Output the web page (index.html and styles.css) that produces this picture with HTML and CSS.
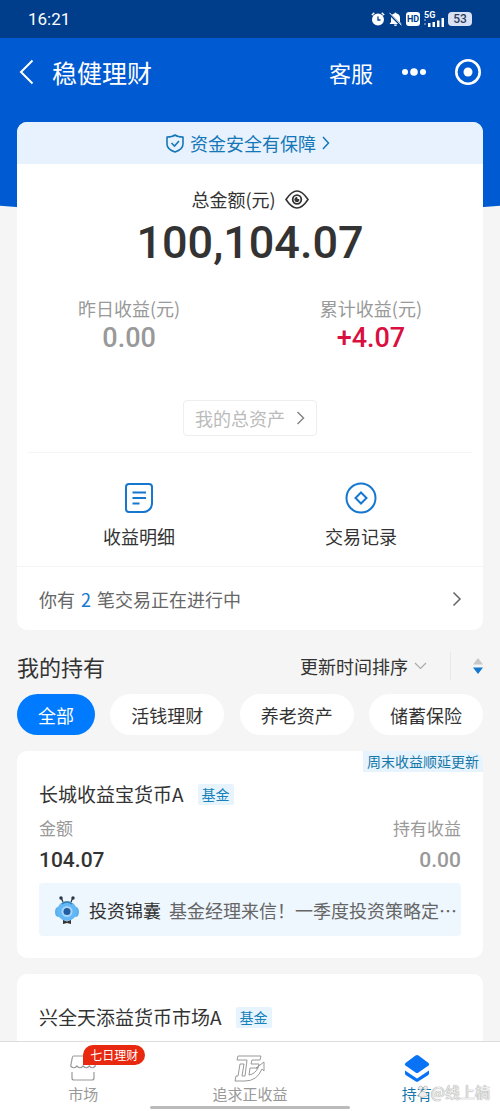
FILE: index.html
```html
<!DOCTYPE html>
<html lang="zh-CN">
<head>
<meta charset="utf-8">
<meta name="viewport" content="width=device-width, initial-scale=1">
<title>稳健理财</title>
<link rel="stylesheet" href="styles.css">
</head>
<body>
<div class="app">
  <div class="status">
    <span class="time">16:21</span>
    <div class="status-icons">
      <svg width="14" height="14" viewBox="0 0 14 14"><circle cx="7" cy="7.500" r="6" fill="#fff"/><path d="M.8 3 3.300.9M13.200 3 10.700.9" stroke="#fff" stroke-width="1.400"/><path d="M7 4.500v3.500h2.500" stroke="#003e8c" stroke-width="1.300" fill="none"/></svg>
      <svg width="13" height="15" viewBox="0 0 13 15"><path d="M6.500.5a1 1 0 0 1 1 1A4.500 4.500 0 0 1 11 6v4l1.500 2H.5L2 10V6a4.500 4.500 0 0 1 3.500-4.500 1 1 0 0 1 1-1zM5 12.500h3a1.500 1.500 0 0 1-3 0z" fill="#fff"/><path d="m0 1.500 12.500 12.500" stroke="#003e8c" stroke-width="2.200"/><path d="m.5.8 12 12.500" stroke="#fff" stroke-width="1"/></svg>
      <span class="hd">HD</span>
      <span class="signal"><span class="net">5G</span><svg width="20" height="9" viewBox="0 0 20 9"><path d="M4 9V5h2.500v4zM8.500 9V4H11v5zM13 9V2.500h2.500V9zM17.500 9V0H20v9z" fill="#fff"/><path d="M0 1h2v2H0zM0 5h2v2H0z" fill="#fff" opacity=".35"/></svg></span>
      <span class="battery">53</span>
    </div>
  </div>
  <main class="content">
    <header class="hero">
      <div class="titlebar">
        <button class="icon-btn" aria-label="返回"><svg width="16" height="26" viewBox="0 0 16 26" fill="none" stroke="#fff" stroke-width="2"><path d="M14.500 1.500 3 13l11.500 11.500"/></svg></button>
        <h1 class="title">稳健理财</h1>
        <button class="service">客服</button>
        <button class="icon-btn" aria-label="更多"><svg width="26" height="8" viewBox="0 0 26 8" fill="#fff"><circle cx="4" cy="4" r="3"/><circle cx="13" cy="4" r="3.800"/><circle cx="22" cy="4" r="3"/></svg></button>
        <button class="icon-btn close" aria-label="关闭"><svg width="26" height="26" viewBox="0 0 26 26"><circle cx="13" cy="13" r="11.700" fill="none" stroke="#fff" stroke-width="2.600"/><circle cx="13" cy="13" r="4.500" fill="#fff"/></svg></button>
      </div>
    </header>
    <section class="card summary">
      <a class="safety" href="#">
        <svg width="18" height="19" viewBox="0 0 18 19" fill="none" stroke="#1677b8" stroke-width="1.600"><path d="M9 1c2 1.500 4.500 2 8 2v7c0 4-3.500 6.500-8 8-4.500-1.500-8-4-8-8V3c3.500 0 6-.5 8-2z" stroke-linejoin="round"/><path d="m5.500 9 3 3 4.500-5"/></svg>
        <span>资金安全有保障</span>
        <svg width="8" height="14" viewBox="0 0 8 14" fill="none" stroke="#1677b8" stroke-width="1.500"><path d="m1 1 5.500 6L1 13"/></svg>
      </a>
      <div class="total-label"><span>总金额(元)</span>
        <button class="icon-btn" aria-label="隐藏金额"><svg width="24" height="19" viewBox="0 0 24 19" fill="none" stroke="#333" stroke-width="1.600"><path d="M1 9.500C5 3.500 8 1 12 1s7 2.500 11 8.500C19 15.500 16 18 12 18S5 15.500 1 9.500z"/><circle cx="12" cy="9.500" r="4.300" stroke-width="1.800"/><path d="M12 7.500v2h2a2.100 2.100 0 1 1-2-2z" fill="#333" stroke-width="1"/></svg></button>
      </div>
      <div class="total">100,104.07</div>
      <div class="earnings">
        <div><div class="earn-label">昨日收益(元)</div><div class="earn">0.00</div></div>
        <div><div class="earn-label">累计收益(元)</div><div class="earn gain">+4.07</div></div>
      </div>
      <button class="assets">我的总资产 <svg width="9" height="14" viewBox="0 0 9 14" fill="none" stroke="#888" stroke-width="1.500"><path d="m1.500 1 6 6-6 6"/></svg></button>
      <div class="shortcuts">
        <a class="shortcut" href="#"><svg width="28" height="32" viewBox="0 0 28 32" fill="none" stroke="#1677cf" stroke-width="2"><path d="M4 2h20q3 0 3 3v17q-1 7-8 8H4q-3 0-3-3V5q0-3 3-3z"/><path d="M7.500 10.500H21M7.500 16H21M7.500 21.500h7"/></svg><span>收益明细</span></a>
        <a class="shortcut" href="#"><svg width="32" height="32" viewBox="0 0 32 32" fill="none" stroke="#1677cf" stroke-width="2"><circle cx="16" cy="16" r="14.500"/><path d="m16 10.500 5.500 5.500-5.500 5.500-5.500-5.500z"/></svg><span>交易记录</span></a>
      </div>
      <a class="pending" href="#"><span>你有 <b>2</b> 笔交易正在进行中</span><svg width="10" height="16" viewBox="0 0 10 16" fill="none" stroke="#666" stroke-width="1.500"><path d="m1.500 1.500 6.500 6.500-6.500 6.500"/></svg></a>
    </section>
    <div class="holdings-head">
      <h2 class="holdings-title">我的持有</h2>
      <button class="sort">更新时间排序 <svg width="13" height="8" viewBox="0 0 13 8" fill="none" stroke="#aaa" stroke-width="1.200"><path d="m1 1 5.500 5.500L12 1"/></svg></button>
      <button class="order" aria-label="排序方向"><svg width="10" height="18" viewBox="0 0 10 18"><path d="m5 1 5 6.500H0z" fill="#c8c8c8"/><path d="M0 10.500h10L5 17z" fill="#1677cf"/></svg></button>
    </div>
    <div class="filters">
      <button class="chip active">全部</button>
      <button class="chip">活钱理财</button>
      <button class="chip">养老资产</button>
      <button class="chip">储蓄保险</button>
    </div>
    <article class="card holding">
      <span class="notice">周末收益顺延更新</span>
      <h3 class="fund">长城收益宝货币A <span class="tag">基金</span></h3>
      <div class="pair small"><span>金额</span><span>持有收益</span></div>
      <div class="pair amount"><span>104.07</span><span class="muted">0.00</span></div>
      <a class="tip" href="#">
        <svg class="mascot" width="26" height="30" viewBox="0 0 26 30"><path d="M9 7 7.500 3.500M17 7l1.500-3.500" stroke="#333" stroke-width="1.300"/><circle cx="7" cy="3" r="1.700" fill="#293647"/><circle cx="19" cy="3" r="1.700" fill="#293647"/><ellipse cx="4" cy="17" rx="3" ry="5" fill="#5aafee"/><ellipse cx="22" cy="17" rx="3" ry="5" fill="#5aafee"/><circle cx="13" cy="16" r="10" fill="#63b7f4"/><path d="M8 9q5-4 10 0" fill="none" stroke="#3c7cae" stroke-width="1.500"/><circle cx="13" cy="16.500" r="5.500" fill="#a5d6fa"/><circle cx="13" cy="16.500" r="3.500" fill="#245ca0"/><path d="m9 25 4 1.500 4-1.500v4l-4-1-4 1z" fill="#333"/></svg>
        <span class="tip-text"><strong>投资锦囊</strong>基金经理来信！一季度投资策略定…</span>
      </a>
    </article>
    <article class="card holding">
      <h3 class="fund">兴全天添益货币市场A <span class="tag">基金</span></h3>
    </article>
  </main>
  <nav class="tabs">
    <a class="tab" href="#">
      <span class="tab-icon"><svg width="26" height="28" viewBox="0 0 26 28" fill="none" stroke="#999" stroke-width="1.200"><path d="M3.500 2h19q1 0 1.300 2l1.500 8q-3 3.500-6 0-3.100 3.500-6.200 0-3.100 3.500-6.200 0-3 3.500-6.200 0L2.200 4q.3-2 1.300-2zM2 18v6q0 2 2 2h18q2 0 2-2v-6"/></svg><span class="badge">七日理财</span></span>
      <span>市场</span>
    </a>
    <a class="tab" href="#">
      <span class="tab-icon"><svg width="34" height="28" viewBox="0 0 34 28" fill="none" stroke="#999" stroke-width="1"><path d="M5 2h23l-1 4h-8l-1 4h8l-1 4h-8l-1 7q6-1 9-7h-2l8-6v9l-2-2q-5 12-17 12H2l1-5h2L7 10h4L9 22h3l2-16H4z"/></svg></span>
      <span>追求正收益</span>
    </a>
    <a class="tab current" href="#">
      <span class="tab-icon"><svg width="26" height="28" viewBox="0 0 26 28" fill="#0a72f5"><path d="M11.500 1.500q1.500-1 3 0l10 7.500q1.500 1.200 0 2.400l-10 7.200q-1.500 1-3 0l-10-7.200Q0 10.200 1.500 9z"/><path d="m1 16.500 12 8 12-8v3q0 1-1 1.700l-9.500 6q-1.500 1-3 0L2 21.200Q1 20.500 1 19.500z"/></svg></span>
      <span>持有</span>
    </a>
    <span class="watermark"><svg width="12" height="14" viewBox="0 0 12 14" fill="#eee" stroke="#aaa" stroke-width=".6"><circle cx="3.500" cy="3" r="2"/><circle cx="8.500" cy="3" r="2"/><path d="M6 6q4 1 4.500 5-4.500 3-9 0Q2 7 6 6z"/></svg>@线上楠</span>
  </nav>
</div>
</body>
</html>
```
FILE: styles.css
```css
* { box-sizing: border-box; }
body { margin: 0; font-family: "Noto Sans CJK SC", sans-serif; color: #333; background: #f5f5f5; }
h1, h2, h3 { margin: 0; font-weight: 400; }
button { margin: 0; padding: 0; border: 0; background: none; font: inherit; color: inherit; }
a { color: inherit; text-decoration: none; }
svg { display: block; flex: none; }
.app { height: 100vh; display: flex; flex-direction: column; }
.status { flex: none; height: 38px; padding: 0 28px; display: flex; align-items: center; justify-content: space-between; background: #003e8c; color: #fff; }
.time { font: 400 17px/38px Roboto, sans-serif; }
.status-icons { display: flex; align-items: center; gap: 4px; }
.hd { width: 14px; border-radius: 3px; background: #fff; color: #003e8c; font: 700 9px/14px Roboto, sans-serif; text-align: center; }
.signal { display: flex; flex-direction: column; height: 15px; position: relative; justify-content: flex-end; }
.net { position: absolute; top: -1px; left: 0; font: 700 9px/9px Roboto, sans-serif; }
.battery { width: 24px; border-radius: 4px; background: #d9e2f2; color: #2b3d5c; font: 500 12px/14px Roboto, sans-serif; text-align: center; }
.content { flex: 1; min-height: 0; overflow: hidden; }
.hero { height: 178px; background: #005ad2; clip-path: ellipse(150% 100% at 50% 0); color: #fff; }
.titlebar { height: 68px; padding: 0 19px 0 18px; display: flex; align-items: center; }
.title { flex: 1; margin-left: 18px; font-size: 25px; line-height: 36px; }
.service { margin-right: 28px; font-size: 22px; line-height: 32px; }
.close { margin-left: 28px; }
.card { margin: 0 17px; border-radius: 10px; background: #fff; position: relative; overflow: hidden; }
.summary { margin-top: -94px; display: flex; flex-direction: column; }
.safety { height: 42px; padding-right: 4px; display: flex; align-items: center; justify-content: center; gap: 6px; background: #e7f2fe; color: #1677b8; font-size: 18px; }
.total-label { margin-top: 21px; display: flex; align-items: center; justify-content: center; gap: 9px; font-size: 18px; line-height: 28px; }
.total { text-align: center; font: 500 45px/60px Roboto, sans-serif; }
.earnings { margin-top: 21px; padding: 0 61px; display: flex; justify-content: space-between; text-align: center; color: #999; }
.earn-label { font-size: 18px; line-height: 28px; }
.earn { font: 500 27px/32px Roboto, sans-serif; }
.gain { color: #d90f40; }
.assets { align-self: center; margin-top: 46px; height: 36px; padding: 0 11px; display: flex; align-items: center; gap: 11px; border: 1px solid #eee; border-radius: 4px; color: #bbb; font-size: 18px; }
.shortcuts { margin: 16px 11px 0; padding-top: 29px; height: 114px; border-top: 1px solid #f5f5f5; display: grid; grid-template-columns: 1fr 1fr; }
.shortcut { display: flex; flex-direction: column; align-items: center; gap: 8px; font-size: 18px; line-height: 28px; }
.pending { height: 64px; padding: 0 21px 0 22px; border-top: 1px solid #f5f5f5; display: flex; align-items: center; justify-content: space-between; font-size: 18px; color: #666; }
.pending b { font-weight: 400; color: #1677cf; margin: 0 2px; }
.holdings-head { margin: 20px 17px 0; display: flex; align-items: center; height: 32px; }
.holdings-title { flex: 1; font-size: 22px; line-height: 32px; }
.sort { display: flex; align-items: center; gap: 6px; font-size: 18px; line-height: 28px; }
.order { height: 28px; margin-left: 23px; padding-left: 22px; border-left: 1px solid #e8e8e8; }
.filters { margin: 12px 17px 0; display: flex; justify-content: space-between; }
.chip { height: 41px; padding: 0 21px; border-radius: 21px; background: #fff; font-size: 18px; }
.active { background: #007aff; color: #fff; }
.holding { margin-top: 16px; padding: 28px 22px 22px; }
.notice { position: absolute; top: 0; right: 0; padding: 0 4px; background: #e7f4fe; color: #1677a8; font-size: 14px; line-height: 21px; }
.fund { display: flex; align-items: center; gap: 14px; font-size: 19px; line-height: 30px; }
.tag { padding: 0 4px; border-radius: 2px; background: #e7f4fe; color: #1680b8; font-size: 14px; line-height: 21px; }
.pair { display: flex; justify-content: space-between; }
.small { margin-top: 6px; font-size: 17px; line-height: 26px; color: #999; }
.amount { margin-top: 4px; font: 500 21px/30px Roboto, sans-serif; }
.muted { color: #999; }
.tip { margin-top: 8px; height: 53px; padding: 0 0 0 15px; border-radius: 4px; display: flex; align-items: center; gap: 9px; background: #eef6fe; font-size: 18px; color: #666; }
.tip-text { flex: 1; min-width: 0; overflow: hidden; white-space: nowrap; text-overflow: ellipsis; }
.tip-text strong { margin-right: 8px; font-weight: 400; color: #333; }
.tabs { position: relative; flex: none; height: 70px; padding-top: 12px; border-top: 1px solid #ddd; background: #fff; display: grid; grid-template-columns: repeat(3, 1fr); }
.tabs::after { content: ""; position: absolute; left: 30%; right: 30%; bottom: 2px; height: 3px; border-radius: 2px; background: #bbb; }
.tab { display: flex; flex-direction: column; align-items: center; font-size: 15px; line-height: 24px; color: #999; }
.tab-icon { position: relative; }
.badge { position: absolute; left: 13px; top: -9px; padding: 0 7px; border-radius: 10px 10px 10px 0; background: #e8290f; color: #fff; font-size: 12px; line-height: 20px; white-space: nowrap; }
.current { color: #1677a8; }
.watermark { position: absolute; right: 10px; bottom: 7px; display: flex; align-items: center; gap: 2px; font-size: 15px; line-height: 24px; color: #eee; text-shadow: 0 0 1px #999, 0 0 1px #999; }
```
